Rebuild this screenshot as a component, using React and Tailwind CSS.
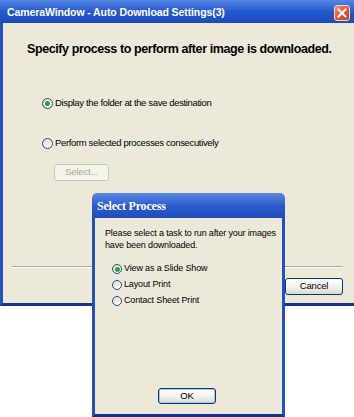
import React from 'react';

const Radio = ({ checked, size = 'w-[11px] h-[11px]' }) => (
  <span
    className={`${size} shrink-0 rounded-full border border-[#1c5180] bg-gradient-to-br from-[#dcd9cf] to-white flex items-center justify-center`}
  >
    {checked && <span className="w-[5px] h-[5px] rounded-full bg-[#2aa52a]" />}
  </span>
);

const XpButton = ({ children, disabled, focused, className = '' }) => (
  <div
    className={`${className} flex items-center justify-center rounded-[3px] border text-[9.5px] tracking-[-0.2px] ${
      disabled
        ? 'border-[#c9c7ba] bg-[#f5f4ea] text-[#aca899]'
        : 'border-[#003c74] bg-gradient-to-b from-white via-[#f4f3ee] to-[#dcd9ce] text-black'
    } ${focused ? 'shadow-[inset_0_0_0_1px_#a8c4f0]' : ''}`}
  >
    {children}
  </div>
);

const App = () => {
  return (
    <div className="relative w-[354px] h-[417px] overflow-hidden bg-white font-['Liberation_Sans',Arial,sans-serif]">
      {/* main window */}
      <div className="h-[306px] flex flex-col">
        <div className="h-[23px] shrink-0 flex items-center justify-between pl-[7px] pr-[4px] bg-gradient-to-b from-[#5587e6] via-[#2459cd] to-[#1d4cbb]">
          <span className="text-white font-bold text-[10.5px] tracking-[-0.1px] leading-none pt-[2px]">
            CameraWindow - Auto Download Settings(3)
          </span>
          <div className="w-[16px] h-[16px] mt-[2px] rounded-[3px] border border-[#f3d6cc] bg-gradient-to-br from-[#f0937a] via-[#de5a37] to-[#c2391a] flex items-center justify-center">
            <svg width="10" height="10" viewBox="0 0 10 10">
              <path d="M1.5 1.5 L8.5 8.5 M8.5 1.5 L1.5 8.5" stroke="white" strokeWidth="2" strokeLinecap="square" />
            </svg>
          </div>
        </div>

        <div className="flex-1 flex flex-col bg-[#ece9d8] border-l-[3px] border-b-[3px] border-l-[#2452c4] border-b-[#17338f]">
          <h2 className="mt-[19px] ml-[24px] text-[12.5px] font-bold leading-[15px] tracking-[-0.4px] text-black">
            Specify process to perform after image is downloaded.
          </h2>

          <div className="mt-[41px] ml-[39px] h-[11px] flex items-center gap-[2px]">
            <Radio checked />
            <span className="text-[9.5px] tracking-[-0.35px] text-black">Display the folder at the save destination</span>
          </div>

          <div className="mt-[29px] ml-[39px] h-[11px] flex items-center gap-[2px]">
            <Radio />
            <span className="text-[9.5px] tracking-[-0.35px] text-black">Perform selected processes consecutively</span>
          </div>

          <XpButton disabled className="mt-[15px] ml-[51px] w-[55px] h-[17px]">
            Select...
          </XpButton>

          <div className="mt-[85px] ml-[9px] mr-[11px] border-t border-t-[#aca899] border-b border-b-white" />

          <XpButton className="mt-[10px] mr-[11px] self-end w-[58px] h-[17px]">Cancel</XpButton>
        </div>
      </div>

      {/* select process dialog */}
      <div className="absolute left-[92px] top-[193px] w-[193px] h-[224px] flex flex-col">
        <div className="h-[25px] shrink-0 flex items-center pl-[5px] rounded-t-[5px] bg-gradient-to-b from-[#5a8ae4] via-[#2a5ccd] to-[#1f4dba]">
          <span className="text-white font-bold text-[12px] leading-none tracking-[-0.2px] font-['Liberation_Serif',serif]">
            Select Process
          </span>
        </div>
        <div className="flex-1 flex flex-col bg-[#ece9d8] border-x-[3px] border-b-[3px] border-x-[#2250c2] border-b-[#17338f]">
          <p className="mt-[9px] ml-[10px] text-[9px] leading-[12px] tracking-[-0.15px] text-black">
            Please select a task to run after your images
            <br />
            have been downloaded.
          </p>

          <div className="mt-[13px] ml-[17px] flex flex-col gap-[6px]">
            <div className="h-[10px] flex items-center gap-[2px]">
              <Radio checked size="w-[10px] h-[10px]" />
              <span className="text-[9px] tracking-[-0.15px] text-black">View as a Slide Show</span>
            </div>
            <div className="h-[10px] flex items-center gap-[2px]">
              <Radio size="w-[10px] h-[10px]" />
              <span className="text-[9px] tracking-[-0.15px] text-black">Layout Print</span>
            </div>
            <div className="h-[10px] flex items-center gap-[2px]">
              <Radio size="w-[10px] h-[10px]" />
              <span className="text-[9px] tracking-[-0.15px] text-black">Contact Sheet Print</span>
            </div>
          </div>

          <XpButton focused className="mt-auto mb-[10px] ml-[63px] w-[58px] h-[16px]">
            OK
          </XpButton>
        </div>
      </div>
    </div>
  );
};

export default App;
